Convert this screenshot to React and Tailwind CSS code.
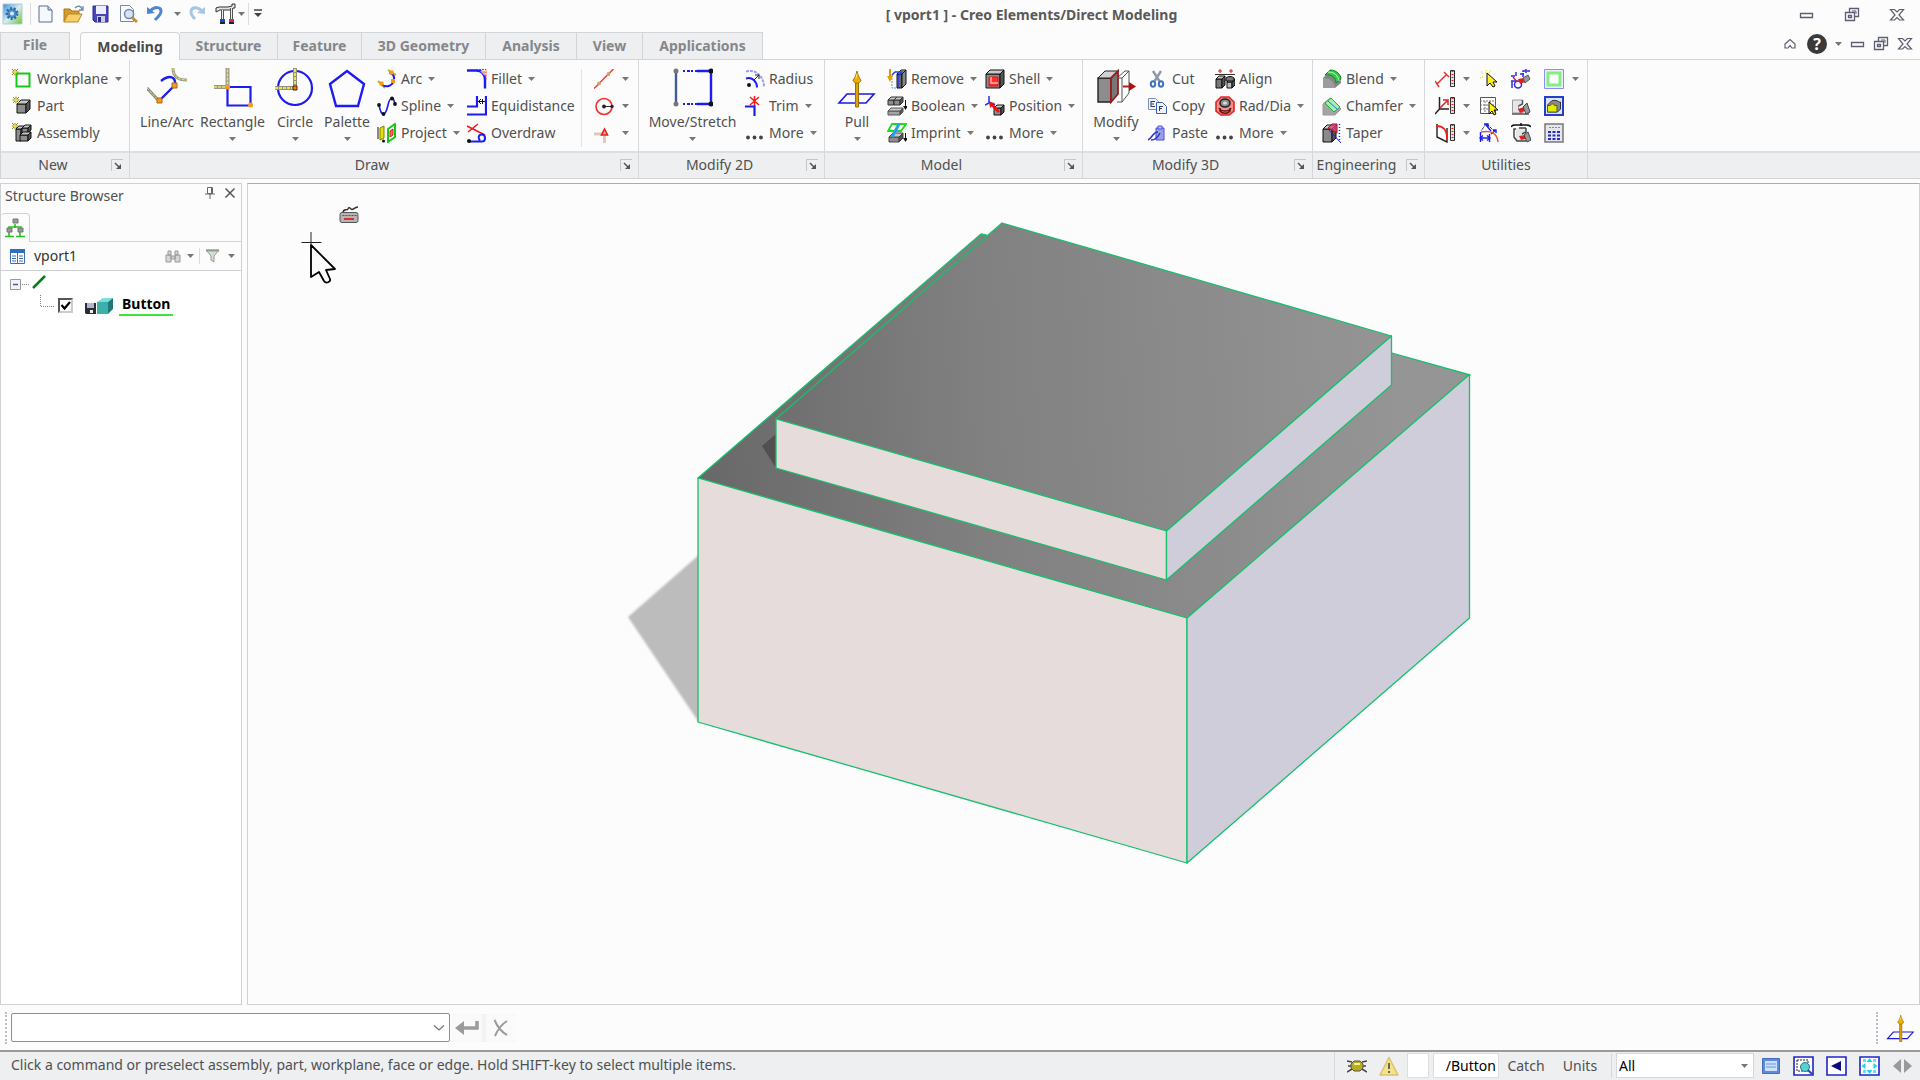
import React from "react";

/* ---------- shared svg bits ---------- */

function Svg({ w = 20, h = 20, children }) {
  return (
    <svg width={w} height={h} viewBox={`0 0 ${w} ${h}`} fill="none" className="shrink-0" aria-hidden="true">
      {children}
    </svg>
  );
}

function Caret() {
  return (
    <Svg w={7} h={4}>
      <path d="M0 0h7L3.500 4z" fill="#777" />
    </Svg>
  );
}

function Spark({ x = 3, y = 3 }) {
  return (
    <g transform={`translate(${x} ${y})`}>
      <path d="M-3-3l6 6M3-3l-6 6M0-3.500v7M-3.500 0h7" stroke="#8a8430" />
      <circle r="1.600" fill="#f2e21c" />
    </g>
  );
}

function Box({ x, y, w, h, d = 4, front = "#8d8d8d", top = "#c9c9c9", side = "#555", stroke = "#111" }) {
  return (
    <g stroke={stroke} strokeLinejoin="round">
      <path d={`M${x} ${y}h${w}v${h}h${-w}z`} fill={front} />
      <path d={`M${x} ${y}l${d} ${-d}h${w}l${-d} ${d}z`} fill={top} />
      <path d={`M${x + w} ${y}l${d} ${-d}v${h}l${-d} ${d}z`} fill={side} />
    </g>
  );
}

function PullShape() {
  return (
    <>
      <path d="M10 26h27l-8 9H2z" stroke="#1a1ae0" strokeWidth="1.600" />
      <path d="M18.500 15h3v24h-3z" fill="#e3a200" stroke="#9a7000" />
      <path d="M20 3c1 4 2 7 4 9 0 4-8 4-8 0 2-2 3-5 4-9z" fill="#f0ae00" stroke="#a87a00" />
      <path d="M19 10l1-4" stroke="#ffe58c" />
    </>
  );
}

const ruler = (
  <>
    <path d="M15.500 1.500h4v16h-4z" fill="#e4e4e4" stroke="#333" />
    <path d="M17.500 2v15" stroke="#e02020" strokeWidth="2" strokeDasharray="1 2" />
    <path d="M19.500 2v15" stroke="#111" strokeDasharray="1 1" />
  </>
);

const dots = (
  <>
    <circle cx="3" cy="14.500" r="1.900" fill="#444" />
    <circle cx="9.500" cy="14.500" r="1.900" fill="#444" />
    <circle cx="16" cy="14.500" r="1.900" fill="#444" />
  </>
);

/* ---------- small ribbon icons, 20 x 20 ---------- */

const icons = {
  workplane: (
    <>
      <path d="M4.500 4.500h13v13h-13z" stroke="#18c818" strokeWidth="2" />
      <Spark />
    </>
  ),
  part: (
    <>
      <Box x={5} y={8} w={9} h={9} d={4} />
      <Spark x={4} y={4} />
    </>
  ),
  assembly: (
    <>
      <Box x={4} y={6} w={5} h={12} d={3} />
      <Box x={10} y={5} w={6} h={5} d={3} />
      <Box x={8} y={12} w={8} h={6} d={3} />
      <Spark />
    </>
  ),
  arc: (
    <>
      <path d="M1 12l7 7M11 1l8 5" stroke="#b8ae3a" strokeWidth="2" />
      <path d="M4.500 15.500c5 3 10 2 12-3s-1-8-4-9" stroke="#1c1cf0" strokeWidth="2" />
      <path d="M2.500 12.500h4v4h-4zM12.500 1.500h4v4h-4zM14 10h4v4h-4z" fill="#f59a1c" />
    </>
  ),
  spline: (
    <>
      <path d="M2 9c1 6 2 9 4.500 9S10 13 11 9s2-7 4-7 2 3 3 6" stroke="#1c1cf0" strokeWidth="1.600" />
      <circle cx="2" cy="9" r="1.900" fill="#111" />
      <circle cx="6.500" cy="18" r="1.900" fill="#111" />
      <circle cx="15" cy="2.500" r="1.900" fill="#111" />
      <circle cx="18" cy="8" r="1.900" fill="#111" />
    </>
  ),
  project: (
    <>
      <path d="M0 4h2v12H0z" fill="#888" />
      <path d="M3 5l4-2v12l-4 2z" fill="#e8e000" stroke="#7d7a10" />
      <path d="M11 6l7-5v13l-7 5z" fill="#fff" stroke="#12c812" strokeWidth="2" />
      <path d="M13 8l3-2v6l-3 2z" fill="#f77" stroke="#e21212" />
      <circle cx="6.500" cy="18" r="1.500" fill="#111" />
    </>
  ),
  fillet: (
    <>
      <path d="M0 1.500h9c6 0 9 4 9 10v8" stroke="#1c1cf0" strokeWidth="2.400" />
      <path d="M9 .500h10v10" stroke="#e02020" strokeDasharray="2 1" />
      <path d="M13 2h5v5z" fill="#f99" />
    </>
  ),
  equidistance: (
    <>
      <path d="M0 10.500h10V0M0 18.500h19V0" stroke="#1c1cf0" strokeWidth="2.200" />
      <path d="M11 5.500h7M14 3l-2.500 2.500L14 8M15.500 3v5" stroke="#111" />
    </>
  ),
  overdraw: (
    <>
      <path d="M1 9L11 1M0 3l18 9" stroke="#f01c1c" strokeWidth="1.600" />
      <path d="M2 18.500h13c4 0 4-7 0-7s-4 4-2 6" stroke="#1c1cf0" strokeWidth="2" />
      <circle cx="2" cy="18" r="2" fill="#111" />
    </>
  ),
  line: (
    <>
      <path d="M0 19.500L19.500 0" stroke="#f03838" strokeWidth="1.500" />
      <circle cx="5" cy="14.500" r="1.900" fill="#c8a468" />
      <circle cx="14.500" cy="5" r="1.900" fill="#c8a468" />
    </>
  ),
  circle: (
    <>
      <circle cx="10" cy="10.500" r="8" stroke="#f03030" strokeWidth="1.600" />
      <path d="M10 10.500h8" stroke="#333" />
      <circle cx="10" cy="10.500" r="1.900" fill="#222" />
      <circle cx="18" cy="10.500" r="1.700" fill="#222" />
    </>
  ),
  point: (
    <>
      <path d="M0 11h10.500v9" stroke="#d6cdb4" strokeWidth="3" />
      <path d="M10.500 6l3 6h-6z" stroke="#e82020" strokeWidth="1.600" fill="#f6b0a0" />
    </>
  ),
  radius: (
    <>
      <path d="M1 2.500C11-.500 19 8 19 18" stroke="#9c9cf6" strokeWidth="2" strokeDasharray="3 1" />
      <path d="M1 9.500c6-2 11 3 11 9" stroke="#1c1cf0" strokeWidth="2" />
      <path d="M9 11l5-5M10 6h4v4" stroke="#222" />
      <circle cx="4" cy="16" r="2" fill="#111" />
    </>
  ),
  trim: (
    <>
      <path d="M5 1l9 8M14 1L5 9M9.500 0v10" stroke="#f01c1c" strokeWidth="1.500" />
      <path d="M0 10.500h9.500M9.500 9.500V20" stroke="#1c1cf0" strokeWidth="2.200" />
    </>
  ),
  more: dots,
  remove: (
    <>
      <path d="M5 6v13h6" stroke="#6c8fd8" strokeDasharray="2 1" />
      <Box x={10} y={5} w={5} h={14} d={4} front="#666" top="#bbb" side="#888" />
      <path d="M5 6l3-3h7l-4 4v11" stroke="#2040e0" strokeWidth="1.500" />
      <path d="M3 0v10" stroke="#d39a10" strokeWidth="2" />
      <path d="M0 7h6l-3 6z" fill="#e3a400" />
    </>
  ),
  boolean: (
    <>
      <Box x={1} y={4} w={6} h={5} d={3} stroke="#333" />
      <Box x={7} y={4} w={6} h={5} d={3} stroke="#333" />
      <Box x={1} y={15} w={12} h={4} d={3} stroke="#555" front="#a5a5a5" />
      <path d="M18.500 4v8" stroke="#111" />
      <path d="M16 10h5l-2.500 4z" fill="#111" />
    </>
  ),
  imprint: (
    <>
      <Box x={2} y={14} w={10} h={5} d={4} stroke="#444" />
      <path d="M5 1h14l-5 7H1z" fill="#fff" stroke="#18e018" strokeWidth="1.800" />
      <path d="M12 1L5 14" stroke="#2a9cf0" strokeWidth="3" />
      <path d="M18.500 10v7" stroke="#111" />
      <path d="M16 15h5l-2.500 4z" fill="#111" />
    </>
  ),
  shell: (
    <>
      <Box x={1} y={5} w={14} h={14} d={4} front="#8d8d8d" />
      <path d="M4 8h9v9H4z" fill="#ff3030" stroke="#e01010" />
      <path d="M6 8v6h7" stroke="#ffb0b0" strokeWidth="1.500" />
    </>
  ),
  position: (
    <>
      <path d="M4 0v7L0 9M4 6l6 3" stroke="#2a2af0" strokeWidth="1.500" />
      <Box x={9} y={12} w={7} h={7} d={3} />
      <path d="M6 8l8 8" stroke="#f01010" strokeWidth="2.500" />
      <path d="M4 6l6 1-5 5z" fill="#f01010" />
    </>
  ),
  cut: (
    <>
      <path d="M5 2l7 11M13 2L6 13" stroke="#8d99a8" strokeWidth="2.400" />
      <ellipse cx="5" cy="15" rx="2.200" ry="2.800" stroke="#3f74bf" strokeWidth="2" />
      <ellipse cx="13" cy="15" rx="2.200" ry="2.800" stroke="#3f74bf" strokeWidth="2" />
    </>
  ),
  copy: (
    <>
      <path d="M.500 2.500h7l3 3v8H.500z" fill="#eef3fb" stroke="#7c93c4" />
      <path d="M3 5v6M3 5.500h4M3 8h3M3 10.500h4" stroke="#333c50" />
      <path d="M8.500 6.500h6l4 4v7h-10z" fill="#eef3fb" stroke="#3c5fae" />
      <path d="M11.500 10v5M11 10.500h4M11 12.500h3" stroke="#333c50" />
    </>
  ),
  paste: (
    <>
      <path d="M8 5h8v12H8z" fill="#9ba0ec" stroke="#4a4ed4" />
      <path d="M10 3h4v3h-4z" fill="#c5c8f6" stroke="#4a4ed4" />
      <path d="M0 17c4-2 5-8 10-8M3 17c4 0 7-3 9-7" stroke="#3236c8" strokeWidth="1.600" />
    </>
  ),
  align: (
    <>
      <path d="M0 5.500h20" stroke="#333" />
      <path d="M5 0v4M3 2h4M16 0v4M14 2h4" stroke="#e01818" />
      <Box x={1} y={10} w={6} h={9} d={3} front="#777" />
      <Box x={12} y={13} w={5} h={6} d={3} front="#bbb" />
      <path d="M11 9c2-2 6-2 8 0v3h-8z" fill="#777" stroke="#111" />
    </>
  ),
  raddia: (
    <>
      <path d="M1 6l5-5h8l5 5v9l-5 4H6l-5-4z" fill="#f2908c" stroke="#e02424" strokeWidth="1.600" />
      <ellipse cx="10" cy="7" rx="5" ry="4" fill="#8f8f8f" stroke="#222" strokeWidth="1.600" />
      <ellipse cx="10" cy="7" rx="2" ry="1.600" fill="#ddd" />
      <path d="M4 12c2 4 10 4 12 0M5 12v3c2 3 8 3 10 0v-3" stroke="#5e1414" strokeWidth="1.500" />
    </>
  ),
  blend: (
    <>
      <path d="M1 9l6-6c8 0 12 5 12 11l-6 5H1z" fill="#858585" />
      <path d="M1 9c7 0 11 3 12 10H1z" fill="#9c9c9c" />
      <path d="M3 6l5-5c7 0 11 5 11 9l-5 4c0-5-4-9-11-8z" fill="#35c84b" stroke="#0c8a20" />
      <path d="M6 3c7 0 10 4 11 9" stroke="#c2f5c8" />
    </>
  ),
  chamfer: (
    <>
      <path d="M1 8l7-6 11 11-6 6H1z" fill="#a4a4a4" stroke="#999" />
      <path d="M3 7l6-5 9 9-6 5z" fill="#a2efb0" stroke="#25a83e" />
      <path d="M6 5l9 8" stroke="#2a6ee0" />
    </>
  ),
  taper: (
    <>
      <Box x={1} y={6} w={9} h={13} d={4} front="#8b8b8b" />
      <path d="M6 5l4-4h5v9z" fill="#e0426a" fillOpacity=".8" stroke="#a01030" />
      <path d="M17.500 1v18" stroke="#2020e0" strokeDasharray="1 2" strokeWidth="1.500" />
      <path d="M6 6l13 14" stroke="#2020e0" />
    </>
  ),
  measureLine: (
    <>
      <path d="M2 15L12 5M0 12l4 6M9 3l5 5" stroke="#e83030" strokeWidth="1.500" />
      {ruler}
    </>
  ),
  measureAxis: (
    <>
      <path d="M4.500 1v12H14M4.500 13L0 18" stroke="#222" strokeWidth="1.500" />
      <path d="M5 12l7-7M8 4h5v5" stroke="#e02020" strokeWidth="1.500" />
      {ruler}
    </>
  ),
  measureArc: (
    <>
      <path d="M2 1v13l10 5V5" stroke="#222" strokeWidth="1.400" />
      <path d="M1 3c7 0 11 3 11 13" stroke="#f01c1c" strokeWidth="1.800" />
      {ruler}
    </>
  ),
  select: (
    <>
      <path d="M4 5L2 2M7 4V0M10 4l2-3M4 8l-4 1" stroke="#e9e040" strokeWidth="1.500" strokeDasharray="1 1" />
      <path d="M8 4v13l3-3 3 4 2-1-2-4h4z" fill="#fbf01e" stroke="#111" strokeLinejoin="round" />
    </>
  ),
  table: (
    <>
      <path d="M1.500 1.500h15v16h-15z" fill="#fff" stroke="#555" />
      <path d="M1 5h16M1 9h16M1 13h16M6 5v12M11 5v12" stroke="#777" strokeDasharray="2 1" />
      <path d="M10 6v12l3-3 2 4 2-1-2-4h4z" fill="#fbf01e" stroke="#111" strokeLinejoin="round" />
    </>
  ),
  dimension: (
    <>
      <path d="M7 1L2 8M8 1l7 7" stroke="#333" strokeDasharray="3 1" />
      <path d="M1.500 9v10M10.500 11v8M1 15h9" stroke="#1c1cf0" strokeWidth="1.400" />
      <path d="M4 12.500L1 15l3 2.500M8 12.500l3 2.500-3 2.500M5 1h4v3M7 2l5 6M12 11l5-4M17 10V7h-3" stroke="#1c1cf0" strokeWidth="1.400" />
      <path d="M2 9c10-2 16 1 17 10" stroke="#e06030" strokeWidth="1.500" />
    </>
  ),
  clean: (
    <>
      <path d="M0 7h5V2M12 8V2h7M9 5h5M15 0v5" stroke="#2a2af0" strokeDasharray="4 1" strokeWidth="1.500" />
      <path d="M1 12v7M0 12h6" stroke="#2a2af0" strokeWidth="1.500" />
      <circle cx="7" cy="15.500" r="3.500" stroke="#2a2af0" strokeWidth="1.500" />
      <path d="M2 8l4 5" stroke="#e02020" strokeWidth="1.500" />
      <path d="M7 10l6-1 1 4-5 2z" fill="#e02020" />
      <path d="M12 9l5-3 2 4-5 4z" fill="#999" stroke="#555" />
    </>
  ),
  cleanPart: (
    <>
      <path d="M1.500 4h10v4l-4 2v4l5 3H1.500z" fill="#e6e6e6" stroke="#999" />
      <path d="M1 18h17M11.500 4v4l-4 2" stroke="#555" strokeWidth="1.500" />
      <path d="M7 13l6-2 1 4-5 2z" fill="#e02020" />
      <path d="M12 11l4-4 3 9-4 2z" fill="#999" stroke="#444" />
    </>
  ),
  cleanAsm: (
    <>
      <path d="M0 4c1-2 2-2 4-2h11c2 0 4 0 5 2M10 0v3" stroke="#111" strokeWidth="1.500" />
      <path d="M5 5h10v4l-4 3v3l3 3H5z" fill="#e6e6e6" />
      <path d="M5 6H3v8l3 4h9M15 5v4l-4 2M8 5h7" stroke="#444" strokeWidth="1.500" />
      <path d="M8 13l6-1 1 4-5 1z" fill="#e02020" />
      <path d="M13 12l4-3 3 8-4 2z" fill="#999" stroke="#444" />
    </>
  ),
  frame: (
    <>
      <path d="M.500.500h19v19H.500z" fill="#eef" stroke="#8c8cf0" />
      <path d="M4 4h12v12H4z" stroke="#84ee84" strokeWidth="3" fill="#fff" />
    </>
  ),
  solid: (
    <>
      <path d="M1 1h18v18H1z" fill="#dde4f8" stroke="#2440c8" strokeWidth="2" />
      <path d="M3.500 9l4-4c2-1 5-1 8 1h1v7l-3 3h-10z" fill="#8a8a8a" stroke="#333" />
      <path d="M3.500 9.500h3c0-2 4-2 4 0H13v6.500H3.500z" fill="#e4ec00" stroke="#555" />
    </>
  ),
  calculator: (
    <>
      <path d="M1 1h18v18H1z" fill="#e6e6ee" stroke="#777" strokeWidth="1.500" />
      <path d="M5 4.500h11" stroke="#888" strokeDasharray="2 1" />
      <path d="M4 9h12M4 12.500h12M4 16h12" stroke="#2a2ac8" strokeWidth="2" strokeDasharray="3 1.500" />
    </>
  ),
};

function Icon({ name }) {
  return <Svg>{icons[name]}</Svg>;
}

/* ---------- large ribbon icons, 40 x 40 ---------- */

const bigIcons = {
  lineArc: (
    <>
      <path d="M0 20l12 13" stroke="#8c8c7a" strokeWidth="3" />
      <path d="M0 20l12 13" stroke="#e9e27a" strokeDasharray="3 1" />
      <path d="M26 0c0 8 4 12 14 12" stroke="#999986" strokeWidth="3" />
      <path d="M26 0c0 8 4 12 14 12" stroke="#e9e27a" strokeDasharray="3 1" />
      <path d="M12 33l16-16c1-8-5-11-14-4" stroke="#1c1cf0" strokeWidth="2.400" />
      <path d="M10 30h5v5h-5zM25 15h5v5h-5z" fill="#f59a1c" stroke="#a86a10" />
    </>
  ),
  rectangle: (
    <>
      <path d="M14.500 19v18.500h23V19z" stroke="#1c1cf0" strokeWidth="2.200" />
      <path d="M1 19h13.500V0" stroke="#999986" strokeWidth="4" />
      <path d="M1 19h13.500V0" stroke="#e9e27a" strokeDasharray="3 1" strokeWidth="1.500" />
      <circle cx="14.500" cy="19" r="2.500" fill="#f59a1c" />
      <circle cx="37.500" cy="37" r="2.500" fill="#f59a1c" />
    </>
  ),
  circle: (
    <>
      <circle cx="20" cy="20" r="17" stroke="#1c1cf0" strokeWidth="2.200" />
      <path d="M0 20h20V0" stroke="#8f8f7a" strokeWidth="4" />
      <path d="M0 20h20V0" stroke="#f0e640" strokeDasharray="3 1" strokeWidth="2" />
      <path d="M18 18h4v4h-4z" fill="#f57a1c" stroke="#4a2600" />
    </>
  ),
  palette: <path d="M20 3l17 13-6 22H9L3 16z" stroke="#1c1cf0" strokeWidth="2.400" />,
  stretch: (
    <>
      <path d="M3 3v33" stroke="#3f5f94" strokeWidth="2.400" />
      <path d="M38 3v33M24 3h14M24 36h14" stroke="#1c1cf0" strokeWidth="2.400" />
      <path d="M10 3h14M10 36h14" stroke="#1c1cf0" strokeWidth="2.200" strokeDasharray="2 2 3 1" />
      <circle cx="3" cy="3" r="2.500" fill="#777" />
      <circle cx="3" cy="36" r="2.500" fill="#777" />
      <circle cx="38" cy="3" r="2.500" fill="#111" />
      <circle cx="38" cy="36" r="2.500" fill="#111" />
    </>
  ),
  pull: <PullShape />,
  modify: (
    <>
      <path d="M21 10l8-7h4v22l-7 9h-5M26 10l7-7M26 10v24M21 10h5" stroke="#555" />
      <path d="M2 10h13v24H2z" fill="#8d8d8d" stroke="#222" strokeWidth="1.400" />
      <path d="M2 10l7-7h14l-8 7z" fill="#d2d2d2" stroke="#222" />
      <path d="M15 10l7-7v23l-7 8z" fill="#777" stroke="#9c1c1c" strokeWidth="1.800" />
      <path d="M27 18.500h7" stroke="#c01818" strokeWidth="2" />
      <path d="M33 14l7 4.500-7 4.500z" fill="#b01010" />
    </>
  ),
};

/* ---------- ribbon parts ---------- */

function SmallButton({ icon, label, caret }) {
  return (
    <button className="flex h-[27px] items-center gap-1 whitespace-nowrap" aria-label={label || icon}>
      <Icon name={icon} />
      {label && <span>{label}</span>}
      {caret && (
        <span className={label ? "pl-0.5" : "pl-1"}>
          <Caret />
        </span>
      )}
    </button>
  );
}

function Column({ items, className }) {
  return (
    <div className={`flex flex-col items-start ${className}`}>
      {items.map(([icon, label, caret]) => (
        <SmallButton key={icon} icon={icon} label={label} caret={caret} />
      ))}
    </div>
  );
}

function BigButton({ icon, label, caret = true, className }) {
  return (
    <button className={`flex flex-col items-center whitespace-nowrap ${className}`}>
      <span className="flex h-[45px] items-center">
        <Svg w={40} h={40}>{bigIcons[icon]}</Svg>
      </span>
      <span className="leading-6">{label}</span>
      <span className="flex h-2.5 items-center">{caret && <Caret />}</span>
    </button>
  );
}

function Group({ title, launcher = true, className, children }) {
  return (
    <section className="flex flex-col border-r border-[#d6d8db]">
      <div className={`flex h-[91px] pt-[5px] ${className}`}>{children}</div>
      <div className="flex h-[27px] items-center border-t-2 border-[#dcdee0] bg-[#edeff1] pb-0.5">
        <h2 className="flex-1 text-center">{title}</h2>
        {launcher && (
          <button className="mx-1.5 flex" aria-label={`${title} options`}>
            <Svg w={12} h={12}>
              <path d="M.500 12V.500H12" stroke="#c4c6c8" />
              <path d="M4 4l5 5" stroke="#555" strokeWidth="1.500" />
              <path d="M10 5v5H5z" fill="#555" />
            </Svg>
          </button>
        )}
      </div>
    </section>
  );
}

function Ribbon() {
  return (
    <div className="flex border-b border-l border-[#d2d4d7]">
      <Group title="New" className="w-[128px] pl-[11px]">
        <Column
          className="[&>button]:gap-[5px]"
          items={[["workplane", "Workplane", true], ["part", "Part"], ["assembly", "Assembly"]]}
        />
      </Group>
      <Group title="Draw" className="w-[508px] pl-1.5">
        <BigButton icon="lineArc" label="Line/Arc" caret={false} className="w-[62px]" />
        <BigButton icon="rectangle" label="Rectangle" className="w-[69px]" />
        <BigButton icon="circle" label="Circle" className="w-14" />
        <BigButton icon="palette" label="Palette" className="w-12" />
        <Column
          className="ml-1.5 w-[90px]"
          items={[["arc", "Arc", true], ["spline", "Spline", true], ["project", "Project", true]]}
        />
        <Column
          className="w-[114px]"
          items={[["fillet", "Fillet", true], ["equidistance", "Equidistance"], ["overdraw", "Overdraw"]]}
        />
        <div className="my-1 w-px bg-[#e2e3e5]" />
        <Column
          className="pl-3"
          items={[["line", "", true], ["circle", "", true], ["point", "", true]]}
        />
      </Group>
      <Group title="Modify 2D" className="w-[185px] pl-1">
        <BigButton icon="stretch" label="Move/Stretch" className="w-[99px]" />
        <Column
          className="ml-[3px]"
          items={[["radius", "Radius"], ["trim", "Trim", true], ["more", "More", true]]}
        />
      </Group>
      <Group title="Model" className="w-[257px] pl-2">
        <BigButton icon="pull" label="Pull" className="w-12" />
        <Column
          className="ml-1.5 w-[98px]"
          items={[["remove", "Remove", true], ["boolean", "Boolean", true], ["imprint", "Imprint", true]]}
        />
        <Column items={[["shell", "Shell", true], ["position", "Position", true], ["more", "More", true]]} />
      </Group>
      <Group title="Modify 3D" className="w-[229px] pl-1">
        <BigButton icon="modify" label="Modify" className="w-[58px]" />
        <Column className="ml-[3px] w-[67px]" items={[["cut", "Cut"], ["copy", "Copy"], ["paste", "Paste"]]} />
        <Column items={[["align", "Align"], ["raddia", "Rad/Dia", true], ["more", "More", true]]} />
      </Group>
      <Group title="Engineering" className="w-[111px] pl-[9px]">
        <Column items={[["blend", "Blend", true], ["chamfer", "Chamfer", true], ["taper", "Taper"]]} />
      </Group>
      <Group title="Utilities" launcher={false} className="w-[162px] pl-2.5">
        <Column
          className="w-11"
          items={[["measureLine", "", true], ["measureAxis", "", true], ["measureArc", "", true]]}
        />
        <Column className="w-8" items={[["select"], ["table"], ["dimension"]]} />
        <Column className="w-[33px]" items={[["clean"], ["cleanPart"], ["cleanAsm"]]} />
        <Column items={[["frame", "", true], ["solid"], ["calculator"]]} />
      </Group>
      <div className="flex flex-1 flex-col justify-end">
        <div className="h-[27px] border-t-2 border-[#dcdee0] bg-[#edeff1]" />
      </div>
    </div>
  );
}

/* ---------- title bar and tabs ---------- */

function MinimizeIcon() {
  return (
    <Svg w={16} h={16}>
      <path d="M1.500 6.500h12v4h-12z" stroke="#5c5f73" strokeWidth="1.300" />
    </Svg>
  );
}

function RestoreIcon() {
  return (
    <Svg w={16} h={16}>
      <path d="M5.500 1.500h9v8h-9z" stroke="#5c5f73" strokeWidth="1.300" />
      <path d="M8 4h4v3" stroke="#5c5f73" />
      <path d="M1.500 5.500h9v8h-9z" fill="#fcfcfc" stroke="#5c5f73" strokeWidth="1.300" />
      <path d="M4.500 8.500h3v2h-3z" stroke="#5c5f73" strokeWidth="1.300" />
    </Svg>
  );
}

function CloseIcon() {
  return (
    <Svg w={16} h={16}>
      <path
        d="M1.500 2.500h4L8 5l2.500-2.500h4L10 8l4.500 5h-4L8 10.500 5.500 13h-4L6 8z"
        stroke="#5c5f73"
        strokeWidth="1.200"
      />
    </Svg>
  );
}

function TitleBar() {
  return (
    <header className="flex h-8 items-start">
      <div className="flex h-[28px] items-center pl-0.5">
        <Svg w={22} h={22}>
          <defs>
            <linearGradient id="appIcon" x1="0" y1="0" x2="1" y2="1">
              <stop offset="0" stopColor="#3b8fd0" />
              <stop offset=".5" stopColor="#d8ecf4" />
              <stop offset="1" stopColor="#6fc02c" />
            </linearGradient>
          </defs>
          <path d="M1 1h19v20H1z" fill="url(#appIcon)" stroke="#a9cfe0" />
          <circle cx="10" cy="10.500" r="5" fill="#4b93cc" stroke="#2a6ca8" strokeWidth="3" strokeDasharray="2 1.500" />
          <circle cx="10" cy="10.500" r="2" fill="#d8ecf8" />
        </Svg>
        <span className="mx-1.5 h-[22px] w-px bg-[#dcdcdc]" />
        <button className="w-[26px]" aria-label="New">
          <Svg w={18} h={20}>
            <path d="M2 2h9l4 4v12H2z" fill="#f5f9ff" stroke="#5b6c8c" />
            <path d="M11 2v4h4" fill="#c4d4ee" stroke="#5b6c8c" />
          </Svg>
        </button>
        <button className="w-7" aria-label="Open">
          <Svg w={22} h={20}>
            <path d="M1 18V5h6l2 2h7v4" fill="#d49a2c" stroke="#a87818" />
            <path d="M1 18l4-8h14l-4 8z" fill="#f7cf68" stroke="#b8882a" />
            <path d="M12 4c3-3 6-2 7 1M20 2v4h-4" stroke="#6c88a8" strokeWidth="1.300" />
          </Svg>
        </button>
        <button className="w-7" aria-label="Save">
          <Svg w={20} h={20}>
            <path d="M2 2h15v16H4l-2-2z" fill="#4746c0" stroke="#2c2b8c" />
            <path d="M5 2h10v8H5z" fill="#eef" />
            <path d="M6 12h8v6H6z" fill="#c8cbe8" />
            <path d="M7 13h3v5H7z" fill="#2c2b8c" />
          </Svg>
        </button>
        <button className="w-7" aria-label="Print preview">
          <Svg w={20} h={20}>
            <path d="M1.500 1.500h9l4 4v12h-13z" fill="#fafcff" stroke="#7a879c" />
            <circle cx="10" cy="10" r="4.500" fill="#d4e4f4" stroke="#7488a8" strokeWidth="1.500" />
            <path d="M13 13.500l5 4.500" stroke="#c88c3c" strokeWidth="3" />
          </Svg>
        </button>
        <button className="w-[27px]" aria-label="Undo">
          <Svg w={18} h={20}>
            <path d="M3 7c5-5 11-4 11 0 0 4-3 6-6 9" stroke="#4f86d4" strokeWidth="3" />
            <path d="M0 3v7l8-1z" fill="#4f86d4" />
          </Svg>
        </button>
        <Caret />
        <button className="ml-2 w-[26px]" aria-label="Redo">
          <Svg w={18} h={20}>
            <path d="M13 7C8 2 2 3 2 8c0 3 2 5 4 7" stroke="#a9c5e6" strokeWidth="3" />
            <path d="M16 3v7l-8-1z" fill="#a9c5e6" />
          </Svg>
        </button>
        <button className="flex items-center gap-px" aria-label="Tools">
          <Svg w={22} h={22}>
            <path d="M1 9V5l3-1h9l4-1V1h3v4h-2l-1 2H5z" fill="#e4e4e4" stroke="#333" />
            <path d="M7.500 7v10M16.500 5v12" stroke="#555" strokeWidth="3" />
            <path d="M7.500 7v10M16.500 5v12" stroke="#eee" />
            <path d="M5 16h5v5H5z" fill="#1848d8" />
            <path d="M14 16h5v5h-5z" fill="#e8186c" />
            <path d="M5 20h5M14 20h5" stroke="#222" strokeWidth="2" />
          </Svg>
          <Caret />
        </button>
        <span className="mx-[3px] h-[22px] w-px bg-[#dcdcdc]" />
        <button className="px-0.5" aria-label="Customize toolbar">
          <Svg w={8} h={10}>
            <path d="M0 1h8" stroke="#444" strokeWidth="1.500" />
            <path d="M0 4h8L4 8z" fill="#444" />
          </Svg>
        </button>
      </div>
      <h1 className="flex-1 pt-1 text-center leading-[22px] font-bold text-[#5a5a5a]">
        [ vport1 ] - Creo Elements/Direct Modeling
      </h1>
      <div className="flex gap-[29px] pt-[7px] pr-[15px]">
        <button aria-label="Minimize"><MinimizeIcon /></button>
        <button aria-label="Restore"><RestoreIcon /></button>
        <button aria-label="Close"><CloseIcon /></button>
      </div>
    </header>
  );
}

const tabs = [
  ["Structure", "w-[98px]"],
  ["Feature", "w-[84px]"],
  ["3D Geometry", "w-[124px]"],
  ["Analysis", "w-[91px]"],
  ["View", "w-[66px]"],
  ["Applications", "w-[120px]"],
];

function TabBar() {
  return (
    <nav className="flex h-7 font-bold text-[#85878a]">
      <button className="w-[70px] border border-[#d2d4d7] bg-[#edeff1] pb-0.5">File</button>
      <div className="w-2.5 border-b border-[#d2d4d7]" />
      <button className="w-[100px] rounded-t border border-b-0 border-[#d2d4d7] text-[#4a4a4a]">Modeling</button>
      {tabs.map(([name, width]) => (
        <button key={name} className={`border border-l-0 border-[#d2d4d7] bg-[#edeff1] ${width}`}>
          {name}
        </button>
      ))}
      <div className="flex flex-1 items-center justify-end border-b border-[#d2d4d7] pr-[7px] pb-1">
        <button className="mr-[11px]" aria-label="Collapse ribbon">
          <Svg w={12} h={12}>
            <path d="M1 6l5-4.500L11 6v4H8L6 7.500 4 10H1z" stroke="#5c5f73" strokeWidth="1.200" />
          </Svg>
        </button>
        <button className="flex items-center gap-2" aria-label="Help">
          <span className="flex size-5 items-center justify-center rounded-full bg-[#3a3a3a] text-base leading-5 font-bold text-white">
            ?
          </span>
          <Caret />
        </button>
        <button className="ml-2" aria-label="Minimize view"><MinimizeIcon /></button>
        <button className="ml-[7px]" aria-label="Restore view"><RestoreIcon /></button>
        <button className="ml-2" aria-label="Close view"><CloseIcon /></button>
      </div>
    </nav>
  );
}

/* ---------- structure browser ---------- */

function StructureBrowser() {
  return (
    <aside className="flex w-[242px] shrink-0 flex-col border border-[#cfd1d4]">
      <div className="flex h-[29px] items-start">
        <h2 className="flex-1 pl-1 leading-6">Structure Browser</h2>
        <button className="mt-0.5 mr-2" aria-label="Pin">
          <Svg w={12} h={14}>
            <path d="M3.500 1.500h5v6h-5zM7.500 2v5M1 8h10M6 8v5" stroke="#666" />
          </Svg>
        </button>
        <button className="mt-[3px] mr-[5px]" aria-label="Close panel">
          <Svg w={12} h={12}>
            <path d="M1.500 1.500l9 9M10.500 1.500l-9 9" stroke="#555" strokeWidth="1.500" />
          </Svg>
        </button>
      </div>
      <div className="flex h-[29px]">
        <button
          className="flex w-[29px] items-center justify-center rounded-t border-t border-r border-[#cfd1d4]"
          aria-label="Structure"
        >
          <Svg>
            <path d="M10 6v4M4 12v-3h12v3M4 14v5M15 14v5M0 18.500h9M11 18.500h9" stroke="#24c024" strokeWidth="1.600" />
            <path d="M8 1h5v4H8zM2 10h5v4H2zM13 10h5v4h-5z" fill="#999" stroke="#777" />
          </Svg>
        </button>
        <div className="flex-1 border-b border-[#cfd1d4]" />
      </div>
      <div className="flex h-[29px] items-center border-b border-[#cfd1d4] pr-1.5 pl-[9px] text-[#333]">
        <Svg w={15} h={15}>
          <path d="M.500.500h14v14H.500z" fill="#fff" stroke="#3c6cb4" />
          <path d="M0 0h15v4H0z" fill="#2f6cc8" />
          <path d="M7.500 4v11M2 7h4M2 9.500h4M2 12h4M9 7h4M9 9.500h4M9 12h4" stroke="#3c6cb4" />
        </Svg>
        <span className="flex-1 pl-[9px]">vport1</span>
        <button className="flex items-center gap-1.5" aria-label="Find">
          <Svg w={16} h={14}>
            <path d="M3 2h3v4H3zM10 2h3v4h-3zM1 6h5v7H1zM10 6h5v7h-5zM6 7h4v3H6z" fill="#d6d6d6" stroke="#999" />
          </Svg>
          <Caret />
        </button>
        <span className="mx-[5px] h-4 w-px bg-[#dcdcdc]" />
        <button className="flex items-center gap-2" aria-label="Filter">
          <Svg w={15} h={14}>
            <path d="M1 1h13L9 7v6l-3-2V7z" fill="#cfe3cf" stroke="#999" />
            <path d="M1 1.500h13" stroke="#999" strokeWidth="2" />
          </Svg>
          <Caret />
        </button>
      </div>
      <ul className="flex-1 bg-white pt-1 text-black">
        <li>
          <button className="flex h-5 items-start pl-[9px]" aria-label="Collapse">
            <Svg w={40} h={20}>
              <path d="M.500 4.500h10v10h-10z" fill="#f4f4f4" stroke="#999" />
              <path d="M3 9.500h5" stroke="#3c5fae" strokeWidth="1.500" />
              <path d="M12 9.500h7" stroke="#888" strokeDasharray="1 1" />
              <path d="M23 13L35 1" stroke="#0c7c14" strokeWidth="2.500" />
            </Svg>
          </button>
        </li>
        <li className="flex h-5 items-center pl-[39px]">
          <Svg w={18} h={20}>
            <path d="M.500 0v11.500H15" stroke="#888" strokeDasharray="1 1" />
          </Svg>
          <label className="flex items-center">
            <span className="grid">
              <input
                type="checkbox"
                defaultChecked
                className="peer col-start-1 row-start-1 size-[15px] appearance-none border-2 border-t-[#555] border-r-[#ccc] border-b-[#ccc] border-l-[#555] bg-white"
              />
              <span className="pointer-events-none col-start-1 row-start-1 hidden peer-checked:block">
                <Svg w={15} h={15}>
                  <path d="M3.500 7l3 3.500L12 4" stroke="#000" strokeWidth="2.200" />
                </Svg>
              </span>
            </span>
            <span className="mt-0.5 ml-3">
              <Svg w={30} h={18}>
                <path d="M0 6h11v11H1l-1-1z" fill="#2c2c34" />
                <path d="M2 6h7v5H2z" fill="#b4b4d4" />
                <path d="M5 13h3v3H5z" fill="#eee" />
                <path d="M12 5h11v12H12z" fill="#3eb0ac" />
                <path d="M12 5l6-4h10l-5 4z" fill="#7fdcd6" />
                <path d="M23 5l5-4v11l-5 5z" fill="#1c7a78" />
              </Svg>
            </span>
            <span className="ml-1 border-b-2 border-[#3ce43c] px-[3px] leading-5 font-bold">Button</span>
          </label>
        </li>
      </ul>
    </aside>
  );
}

/* ---------- 3D viewport ---------- */

function Viewport() {
  return (
    <main className="flex min-w-0 flex-1 border border-[#cfd1d4] border-t-[#aaacae]">
      <svg
        viewBox="248 184 1671 820"
        preserveAspectRatio="xMidYMid meet"
        className="min-h-0 w-full"
        role="img"
        aria-label="Button model"
      >
        <defs>
          <linearGradient id="topFace" gradientUnits="userSpaceOnUse" x1="698" y1="478" x2="1400" y2="440">
            <stop offset="0" stopColor="#686868" />
            <stop offset=".4" stopColor="#808080" />
            <stop offset="1" stopColor="#959595" />
          </linearGradient>
          <filter id="soft">
            <feGaussianBlur stdDeviation="1.200" />
          </filter>
        </defs>
        <path d="M628 617l72-63v170z" fill="#bcbcbc" filter="url(#soft)" />
        <g stroke="#16c06c" strokeWidth="1.300" strokeLinejoin="round">
          <path d="M698 478L981 234l5 1 406 118 78 22-283 243z" fill="url(#topFace)" />
          <path d="M698 478l489 140v245L698 722z" fill="#e6dcdc" />
          <path d="M1187 618l282.500-243.500V618L1187 863z" fill="#cfcdd9" />
          <path d="M776 434l-14 12 14 22z" fill="#505050" stroke="none" />
          <path d="M776 419l226-196 389.500 113L1166.500 531z" fill="url(#topFace)" />
          <path d="M776 419l390.500 112v49L776 468z" fill="#e6dcdc" />
          <path d="M1166.500 531l225-195v49l-225 195z" fill="#cfcdd9" />
        </g>
        {/* keyboard hint next to the pointer */}
        <path d="M343 213c0-5 4-2 5-4s1-2 3 0 3-2 7-2" fill="none" stroke="#333" strokeWidth="1.500" />
        <rect x="340" y="212.500" width="18" height="10" rx="2" fill="#b5b5b5" stroke="#555" />
        <path d="M342.500 215.500h14" stroke="#555" strokeDasharray="2 1" />
        <path d="M344 219h10" stroke="#e03030" strokeWidth="2" />
        {/* pointer */}
        <path d="M301.500 242.500h20M311 232v12" stroke="#222" />
        <path
          d="M311 245v32l8-5 5 9c2 3 7 1 6-2l-4-9 9-1z"
          fill="#fcfcfc"
          stroke="#000"
          strokeWidth="1.800"
          strokeLinejoin="round"
        />
      </svg>
    </main>
  );
}

/* ---------- command line and status bar ---------- */

function Grip() {
  return <div className="h-8 border-l-2 border-dotted border-[#b9bdc8]" />;
}

function CommandBar() {
  return (
    <div className="flex h-[45px] items-center pl-[5px]">
      <Grip />
      <div className="ml-1 flex h-[29px] w-[439px] items-center rounded-xs border border-[#8f8f8f] bg-white pr-1">
        <input className="min-w-0 flex-1 px-2 outline-none" aria-label="Command" />
        <button aria-label="Show commands">
          <Svg w={12} h={8}>
            <path d="M1 1.500l5 4.500 5-4.500" stroke="#777" strokeWidth="1.300" />
          </Svg>
        </button>
      </div>
      <div className="ml-0.5 flex h-7 gap-1 bg-[#f3f3f3]">
        <button className="flex w-[30px] items-center justify-center rounded bg-[#fafafa]" aria-label="Enter">
          <Svg w={24} h={16}>
            <path d="M22 1v7H8" stroke="#9b9b9b" strokeWidth="3.500" />
            <path d="M0 8l9-7v14z" fill="#9b9b9b" />
          </Svg>
        </button>
        <button className="flex w-[30px] items-center justify-center rounded bg-[#fafafa]" aria-label="Cancel">
          <Svg w={16} h={18}>
            <path d="M1.500 1c3 7 7 12 12.500 15M14 2C9 5 5 10 2 17" stroke="#9b9b9b" strokeWidth="2" />
          </Svg>
        </button>
      </div>
      <div className="flex flex-1 items-center justify-end pr-1.5">
        <Grip />
        <button className="ml-2" aria-label="Pull">
          <svg width="28" height="30" viewBox="0 0 38 41" fill="none">
            <PullShape />
          </svg>
        </button>
      </div>
    </div>
  );
}

function StatusBar() {
  return (
    <footer className="flex h-[30px] items-stretch border-t-2 border-[#9a9a9a] bg-[#edeff1]">
      <p className="flex-1 pl-[11px] leading-[25px]">
        Click a command or preselect assembly, part, workplane, face or edge. Hold SHIFT-key to select multiple items.
      </p>
      <div className="flex items-center border-l border-[#d6d8db] pr-2 pb-px">
        <button className="mx-3" aria-label="Tracker">
          <Svg>
            <path d="M0 5l5 1M0 16l5-3M1 10h4M20 5l-5 1M20 16l-5-3M19 10h-4" stroke="#444" strokeWidth="1.500" />
            <path d="M4 8l3-3h6l3 3v4l-3 3H7l-3-3z" fill="#b9ab1e" stroke="#555" />
            <path d="M7 8h6" stroke="#f2ee9a" strokeWidth="2" />
          </Svg>
        </button>
        <button className="mr-2" aria-label="Warnings">
          <Svg>
            <path d="M10 1.500L19 19H1z" fill="#f5e08c" stroke="#dcc464" strokeWidth="1.500" strokeLinejoin="round" />
            <path d="M10 7v6M10 15v2" stroke="#666" strokeWidth="2" />
          </Svg>
        </button>
        <span className="mr-1 h-[25px] w-[22px] border border-[#dcdee0] bg-white" />
        <input
          defaultValue="/Button"
          aria-label="Active part"
          className="h-[25px] w-[66px] border border-[#dcdee0] bg-white pr-0.5 text-right text-black outline-none"
        />
        <button className="w-[54px]">Catch</button>
        <button className="w-[54px]">Units</button>
        <span className="mx-1 h-6 w-px bg-[#d6d8db]" />
        <div className="grid h-[25px] w-[138px] items-center border border-[#d6d8db] bg-white">
          <select
            aria-label="Selection filter"
            className="col-start-1 row-start-1 appearance-none bg-transparent pl-0.5 text-black outline-none"
          >
            <option>All</option>
          </select>
          <span className="pointer-events-none col-start-1 row-start-1 mr-[5px] justify-self-end">
            <Caret />
          </span>
        </div>
        <button className="ml-[7px]" aria-label="Viewport">
          <Svg>
            <path d="M1.500 2.500h17v15h-17z" fill="#5b8ce0" stroke="#4a6cb8" />
            <path d="M4 5h12v10H4z" fill="#cfe0fa" />
            <path d="M5 8h10M5 11h10" stroke="#6c94dc" />
          </Svg>
        </button>
        <button className="ml-3" aria-label="Zoom window">
          <Svg w={21} h={20}>
            <path d="M1 1h19v18H1z" fill="#fff" stroke="#2024c8" strokeWidth="1.600" />
            <path d="M4 4h11v11H4z" stroke="#222" strokeDasharray="2 1" />
            <circle cx="12" cy="11" r="4.500" fill="#58cfd0" stroke="#227c88" />
            <path d="M15 14l4 4" stroke="#1c50a0" strokeWidth="2" />
          </Svg>
        </button>
        <button className="ml-3" aria-label="Previous view">
          <Svg w={21} h={20}>
            <path d="M1 1h19v18H1z" fill="#fff" stroke="#2024c8" strokeWidth="1.600" />
            <path d="M15 5v10l-10-5z" fill="#0c0c80" />
          </Svg>
        </button>
        <button className="ml-3" aria-label="Fit view">
          <Svg w={21} h={20}>
            <path d="M1 1h19v18H1z" fill="#fff" stroke="#2024c8" strokeWidth="1.600" />
            <path d="M10.500 2l3 4h-6zM10.500 18l3-4h-6zM2.500 10l4-3v6zM18.500 10l-4-3v6z" fill="#18d4ec" />
            <path d="M4 3h3v3H4zM14 3h3v3h-3zM4 14h3v3H4zM14 14h3v3h-3z" fill="#5ce4f4" />
          </Svg>
        </button>
        <button className="ml-3" aria-label="Scroll">
          <Svg>
            <path d="M9 3v14l-8-7zM12 3v14l8-7z" fill="#9a9a9a" />
          </Svg>
        </button>
      </div>
    </footer>
  );
}

export default function App() {
  return (
    <div className="flex h-screen flex-col overflow-hidden bg-[#fcfcfc] font-['Noto_Sans','Open_Sans',sans-serif] text-sm text-[#505050]">
      <TitleBar />
      <TabBar />
      <Ribbon />
      <div className="flex min-h-0 flex-1 gap-[5px] pt-1">
        <StructureBrowser />
        <Viewport />
      </div>
      <CommandBar />
      <StatusBar />
    </div>
  );
}
